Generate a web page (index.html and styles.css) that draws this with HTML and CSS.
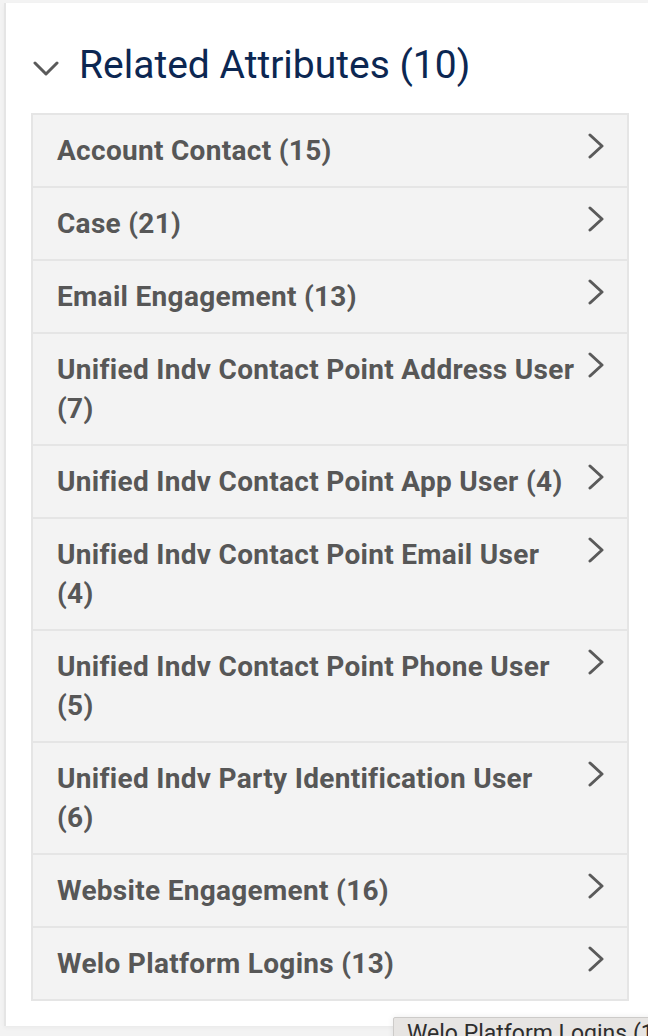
FILE: index.html
```html
<!DOCTYPE html>
<html lang="en">
<head>
    <meta charset="UTF-8">
    <meta name="viewport" content="width=device-width, initial-scale=1.0">
    <title>Related Attributes</title>
    <link rel="stylesheet" href="styles.css">
</head>
<body>
    <div class="panel">
        <div class="section-header">
            <svg class="toggle-icon" width="26" height="16" viewBox="0 0 26 16">
                <polyline points="2,2 13,13 24,2" fill="none" stroke="#5a5a5a" stroke-width="3" stroke-linecap="round" stroke-linejoin="round"/>
            </svg>
            <h2>Related Attributes (10)</h2>
        </div>

        <ul class="attr-list">
            <li class="attr-row"><span class="attr-name">Account Contact (15)</span><svg class="chevron" width="18" height="26" viewBox="0 0 18 26"><polyline points="3,2 15,13 3,24" /></svg></li>
            <li class="attr-row"><span class="attr-name">Case (21)</span><svg class="chevron" width="18" height="26" viewBox="0 0 18 26"><polyline points="3,2 15,13 3,24" /></svg></li>
            <li class="attr-row"><span class="attr-name">Email Engagement (13)</span><svg class="chevron" width="18" height="26" viewBox="0 0 18 26"><polyline points="3,2 15,13 3,24" /></svg></li>
            <li class="attr-row"><span class="attr-name">Unified Indv Contact Point Address User (7)</span><svg class="chevron" width="18" height="26" viewBox="0 0 18 26"><polyline points="3,2 15,13 3,24" /></svg></li>
            <li class="attr-row"><span class="attr-name">Unified Indv Contact Point App User (4)</span><svg class="chevron" width="18" height="26" viewBox="0 0 18 26"><polyline points="3,2 15,13 3,24" /></svg></li>
            <li class="attr-row"><span class="attr-name">Unified Indv Contact Point Email User (4)</span><svg class="chevron" width="18" height="26" viewBox="0 0 18 26"><polyline points="3,2 15,13 3,24" /></svg></li>
            <li class="attr-row"><span class="attr-name">Unified Indv Contact Point Phone User (5)</span><svg class="chevron" width="18" height="26" viewBox="0 0 18 26"><polyline points="3,2 15,13 3,24" /></svg></li>
            <li class="attr-row"><span class="attr-name">Unified Indv Party Identification User (6)</span><svg class="chevron" width="18" height="26" viewBox="0 0 18 26"><polyline points="3,2 15,13 3,24" /></svg></li>
            <li class="attr-row"><span class="attr-name">Website Engagement (16)</span><svg class="chevron" width="18" height="26" viewBox="0 0 18 26"><polyline points="3,2 15,13 3,24" /></svg></li>
            <li class="attr-row"><span class="attr-name">Welo Platform Logins (13)</span><svg class="chevron" width="18" height="26" viewBox="0 0 18 26"><polyline points="3,2 15,13 3,24" /></svg></li>
        </ul>
    </div>

    <div class="tooltip">Welo Platform Logins (13)</div>
</body>
</html>
```

FILE: styles.css
```css
:root {
    --page-bg: #f3f3f3;
    --panel-bg: #ffffff;
    --row-bg: #f3f3f3;
    --border-color: #e5e5e5;
    --title-color: #0c2752;
    --text-color: #575757;
    --icon-color: #5a5a5a;
}

* {
    box-sizing: border-box;
    margin: 0;
    padding: 0;
}

html, body {
    height: 1036px;
    overflow: hidden;
}

body {
    font-family: Roboto, 'Liberation Sans', Arial, sans-serif;
    background-color: var(--page-bg);
    color: var(--text-color);
    padding-top: 3px;
    padding-left: 4px;
    position: relative;
}

.panel {
    background: var(--panel-bg);
    border-left: 2px solid var(--border-color);
    height: 1023px;
    padding: 38px 19px 0 25px;
    box-shadow: 0 2px 4px rgba(0, 0, 0, 0.04);
}

.section-header {
    display: flex;
    align-items: center;
    gap: 20px;
    height: 54px;
    margin-bottom: 18px;
    padding-left: 2px;
}

.toggle-icon {
    flex-shrink: 0;
    margin-top: 2px;
}

.section-header h2 {
    font-size: 39px;
    font-weight: 400;
    color: var(--title-color);
    line-height: 1.25;
    margin-top: -5px;
}

.attr-list {
    list-style: none;
    border: 2px solid var(--border-color);
    border-bottom: none;
}

.attr-row {
    display: flex;
    justify-content: space-between;
    align-items: flex-start;
    gap: 12px;
    background: var(--row-bg);
    border-bottom: 2px solid var(--border-color);
    padding: 16px 22px 16px 24px;
}

.attr-name {
    font-size: 28px;
    font-weight: 700;
    line-height: 39px;
    letter-spacing: 0.3px;
}

.chevron {
    flex-shrink: 0;
    margin-top: 2px;
}

.chevron polyline {
    fill: none;
    stroke: var(--icon-color);
    stroke-width: 3;
    stroke-linecap: round;
    stroke-linejoin: round;
}

.tooltip {
    position: absolute;
    left: 393px;
    top: 1017px;
    background: #e7e5e3;
    border: 1px solid #cdcbc9;
    border-radius: 2px;
    padding: 1px 13px;
    font-size: 23px;
    line-height: 1.3;
    color: #2e2e2e;
    white-space: nowrap;
    box-shadow: 0 0 6px rgba(0, 0, 0, 0.08);
}
```
